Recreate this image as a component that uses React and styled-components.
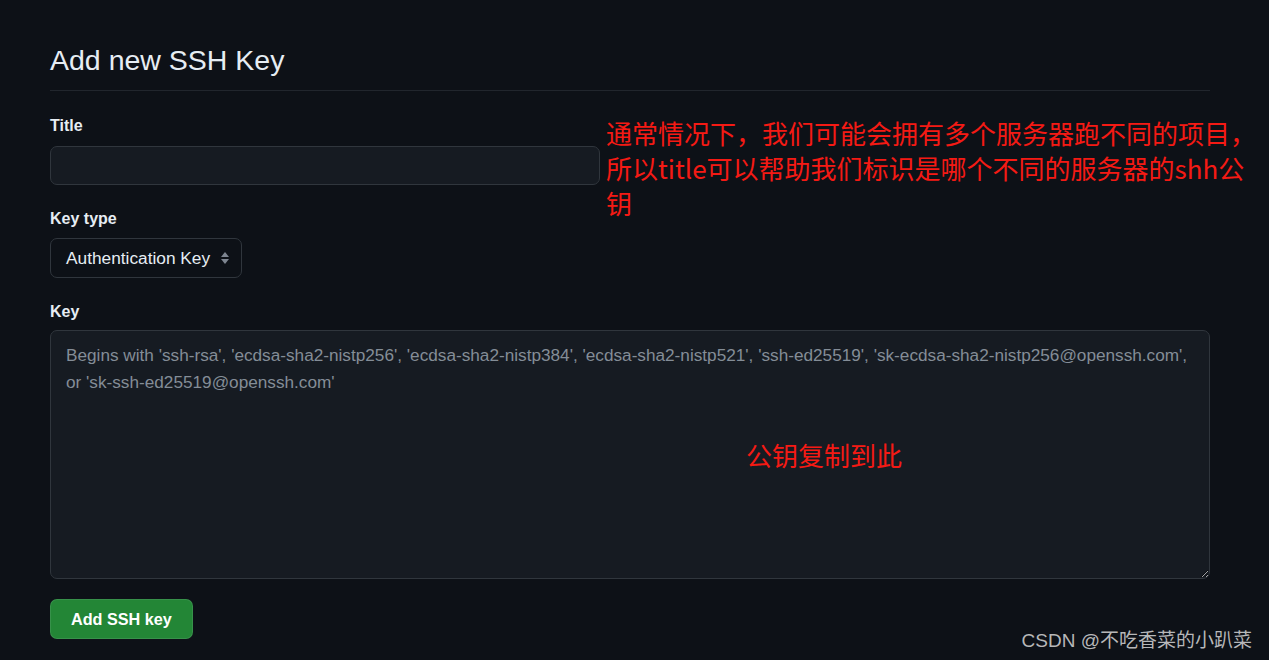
import React from 'react'
import styled, { createGlobalStyle } from 'styled-components'

const GlobalStyle = createGlobalStyle`
  html, body {
    margin: 0;
    padding: 0;
    background: #0d1117;
  }
  body {
    font-family: "Liberation Sans", Arial, "Noto Sans CJK SC", sans-serif;
    color: #e6edf3;
  }
`

const Page = styled.div`
  position: relative;
  width: 1269px;
  height: 660px;
  box-sizing: border-box;
  padding: 39px 59px 0 50px;
  background: #0d1117;
  overflow: hidden;
`

const Header = styled.div`
  border-bottom: 1px solid #21262d;
  padding-bottom: 9px;
  margin-bottom: 23px;
`

const Heading = styled.h2`
  margin: 0;
  font-size: 28.5px;
  font-weight: 400;
  line-height: 42px;
  color: #e6edf3;
`

const Group = styled.div`
  margin-bottom: ${p => p.$gap || 22}px;
`

const Label = styled.label`
  display: block;
  font-size: 16px;
  font-weight: 700;
  line-height: 24px;
  margin-bottom: ${p => p.$gap || 8}px;
  color: #e6edf3;
`

const TextInput = styled.input`
  display: block;
  box-sizing: border-box;
  width: 550px;
  height: 39px;
  background: #161b22;
  border: 1px solid #30363d;
  border-radius: 7px;
  outline: none;
  color: #e6edf3;
  font: inherit;
  padding: 0 15px;
`

const SelectBox = styled.div`
  display: inline-flex;
  align-items: center;
  box-sizing: border-box;
  height: 40px;
  padding: 0 10px 0 15px;
  gap: 9px;
  border: 1px solid #30363d;
  border-radius: 7px;
  background: #0d1117;
  font-size: 17.3px;
  color: #e6edf3;
`

const Arrows = styled.svg`
  width: 12px;
  height: 16px;
  display: block;
`

const KeyArea = styled.textarea`
  display: block;
  box-sizing: border-box;
  width: 100%;
  height: 249px;
  background: #161b22;
  border: 1px solid #30363d;
  border-radius: 7px;
  outline: none;
  color: #e6edf3;
  font-family: "Liberation Sans", Arial, sans-serif;
  font-size: 17.2px;
  line-height: 27px;
  padding: 11px 15px;
  resize: vertical;
  &::placeholder {
    color: #848d97;
  }
`

const Button = styled.button`
  box-sizing: border-box;
  height: 40px;
  padding: 0 20px;
  background: #238636;
  border: 1px solid rgba(240, 246, 252, 0.1);
  border-radius: 7px;
  color: #ffffff;
  font-family: "Liberation Sans", Arial, sans-serif;
  font-size: 16.2px;
  font-weight: 700;
  cursor: pointer;
`

const Note = styled.div`
  position: absolute;
  left: ${p => p.$x}px;
  top: ${p => p.$y}px;
  width: ${p => p.$w || 'auto'};
  font-family: "Noto Sans CJK SC", sans-serif;
  font-size: 26px;
  font-weight: 400;
  line-height: 35px;
  color: #f51a14;
`

const Watermark = styled.div`
  position: absolute;
  right: 17px;
  bottom: 8px;
  font-family: "Liberation Sans", "Noto Sans CJK SC", sans-serif;
  font-size: 19px;
  color: rgba(215, 215, 215, 0.85);
`

const placeholder =
  "Begins with 'ssh-rsa', 'ecdsa-sha2-nistp256', 'ecdsa-sha2-nistp384', 'ecdsa-sha2-nistp521', 'ssh-ed25519', 'sk-ecdsa-sha2-nistp256@openssh.com', or 'sk-ssh-ed25519@openssh.com'"

export default function App() {
  return (
    <Page>
      <GlobalStyle />
      <Header>
        <Heading>Add new SSH Key</Heading>
      </Header>
      <Group>
        <Label>Title</Label>
        <TextInput type="text" />
      </Group>
      <Group>
        <Label $gap={7}>Key type</Label>
        <SelectBox>
          Authentication Key
          <Arrows viewBox="0 0 12 16">
            <path d="M6 2 L10 7 H2 Z" fill="#7d8590" />
            <path d="M6 14 L10 9 H2 Z" fill="#7d8590" />
          </Arrows>
        </SelectBox>
      </Group>
      <Group $gap={20}>
        <Label $gap={6}>Key</Label>
        <KeyArea placeholder={placeholder} />
      </Group>
      <Button>Add SSH key</Button>

      <Note $x={606} $y={115} $w="662px">
        通常情况下，我们可能会拥有多个服务器跑不同的项目，所以title可以帮助我们标识是哪个不同的服务器的shh公钥
      </Note>
      <Note $x={746} $y={437}>公钥复制到此</Note>
      <Watermark>CSDN @不吃香菜的小趴菜</Watermark>
    </Page>
  )
}
